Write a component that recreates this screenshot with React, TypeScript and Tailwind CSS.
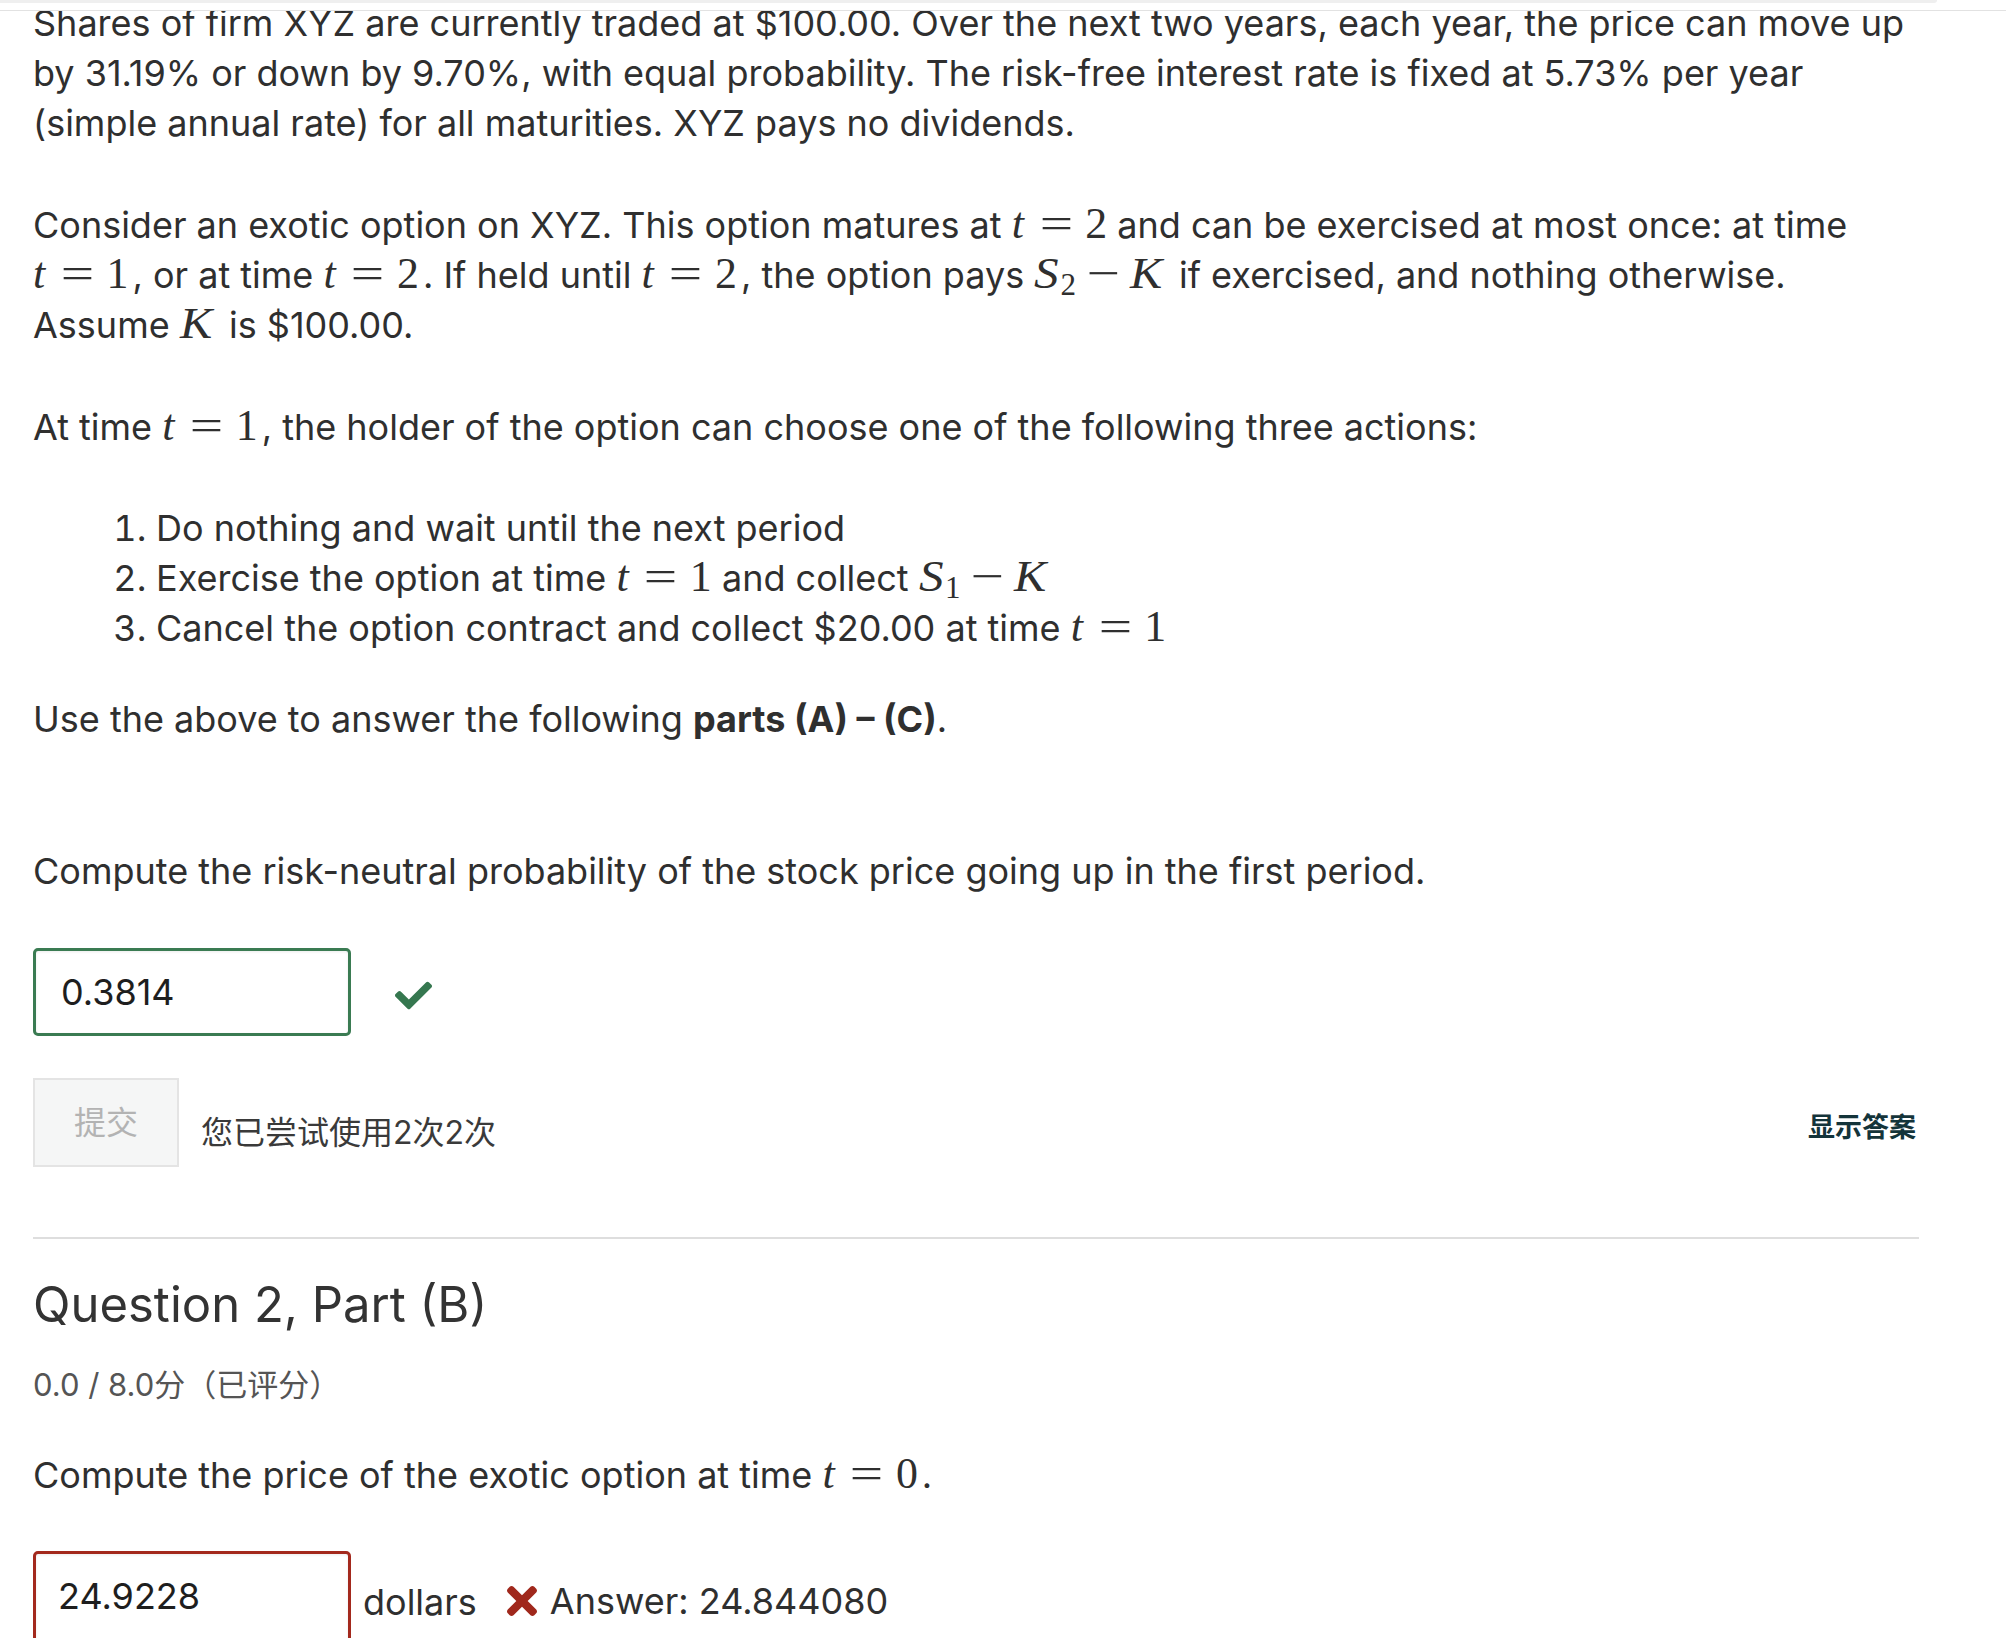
import { FaCheck, FaTimes } from "react-icons/fa";

const mathCls = "font-['Liberation_Serif',serif] text-[1.22em] leading-none whitespace-nowrap";

// wide TeX-like relation / binary operator glyph
function Op({ c, gap }: { c: string; gap: string }) {
  return (
    <span className={`inline-block w-[0.778em] text-center ${gap}`}>
      <span className="inline-block scale-x-[1.35]">{c}</span>
    </span>
  );
}

function Eq({ v, n, p }: { v: string; n: string; p?: string }) {
  return (
    <>
      <span className={mathCls}>
        <i className="inline-block w-[0.34em]">{v}</i>
        <Op c="=" gap="mx-[0.278em]" />
        {n}
      </span>
      {p && <span className="ml-[4px]">{p}</span>}
    </>
  );
}

function Payoff({ sub }: { sub: string }) {
  return (
    <span className={mathCls}>
      <i className="inline-block w-[0.6em]">
        <span className="inline-block scale-x-[1.12] origin-left">S</span>
      </i>
      <span className="inline-block w-[0.5em] text-[0.707em] relative top-[0.22em]">{sub}</span>
      <Op c="−" gap="mx-[0.222em]" />
      <i className="inline-block w-[0.889em]">
        <span className="inline-block scale-x-[1.1] origin-left">K</span>
      </i>
    </span>
  );
}

export default function App() {
  return (
    <div className="relative w-[2006px] h-[1638px] overflow-hidden bg-white text-[#2f2f2f] font-['Inter','Noto_Sans_CJK_SC',sans-serif]">
      {/* sticky header edge */}
      <div className="absolute top-0 left-0 right-0 h-[11px] bg-white border-b border-[#e2e2e2] z-10">
        <div className="h-[3px] w-[1937px] bg-[#efefef] rounded-br-[3px]" />
      </div>

      <div className="w-[1919px] pl-[33px] text-[36px] leading-[50px]">
        <p className="-mt-[2px] mb-[52px]">
          Shares of firm XYZ are currently traded at $100.00. Over the next two years, each year, the price can move up
          by 31.19% or down by 9.70%, with equal probability. The risk-free interest rate is fixed at 5.73% per year
          (simple annual rate) for all maturities. XYZ pays no dividends.
        </p>

        <p className="mb-[52px]">
          Consider an exotic option on XYZ. This option matures at <Eq v="t" n="2" /> and can be exercised at most once:
          at time <Eq v="t" n="1" p="," /> or at time <Eq v="t" n="2" p="." /> If held until <Eq v="t" n="2" p="," /> the
          option pays <Payoff sub="2" /> if exercised, and nothing otherwise. Assume{" "}
          <span className={mathCls}>
            <i className="inline-block w-[0.889em]">
              <span className="inline-block scale-x-[1.1] origin-left">K</span>
            </i>
          </span>{" "}
          is $100.00.
        </p>

        <p className="mb-[51px]">
          At time <Eq v="t" n="1" p="," /> the holder of the option can choose one of the following three actions:
        </p>

        <ol className="list-decimal pl-[123px] mb-[41px]">
          <li>Do nothing and wait until the next period</li>
          <li>
            Exercise the option at time <Eq v="t" n="1" /> and collect <Payoff sub="1" />
          </li>
          <li>
            Cancel the option contract and collect $20.00 at time <Eq v="t" n="1" />
          </li>
        </ol>

        <p className="mb-[102px]">
          Use the above to answer the following <b className="font-bold">parts (A) – (C)</b>.
        </p>

        <p className="mb-[52px]">Compute the risk-neutral probability of the stock price going up in the first period.</p>

        <div className="flex items-center gap-[44px]">
          <div className="w-[318px] h-[88px] border-[3px] border-[#3a7b52] rounded-[5px] shadow-[inset_0_1px_3px_rgba(0,0,0,0.08)] flex items-center pl-[25px] text-[#1e1e1e]">
            0.3814
          </div>
          <FaCheck className="mt-[6px] w-[37px] h-[37px] text-[#35774f]" />
        </div>

        <div className="mt-[42px] flex items-center">
          <button className="w-[146px] h-[89px] bg-[#f5f6f6] border-2 border-[#e4e4e4] text-[#b3b3b3] text-[32px] leading-none">
            提交
          </button>
          <span className="ml-[22px] mt-[20px] text-[#3a3a3a] text-[32px]">您已尝试使用2次2次</span>
          <span className="ml-auto mt-[10px] mr-[3px] text-[27px] font-semibold text-[#14343a]">显示答案</span>
        </div>

        <div className="mt-[70px] h-[2px] bg-[#dedede]" />

        <h3 className="mt-[36px] text-[49px] leading-[60px] text-[#333]">Question 2, Part (B)</h3>

        <div className="mt-[30px] text-[31px] leading-[40px] text-[#555]">0.0 / 8.0分（已评分）</div>

        <p className="mt-[45px]">
          Compute the price of the exotic option at time <Eq v="t" n="0" p="." />
        </p>

        <div className="mt-[51px] flex items-center">
          <div className="w-[318px] h-[100px] border-[3px] border-[#a3291d] rounded-[5px] shadow-[inset_0_1px_3px_rgba(0,0,0,0.08)] flex items-start pt-[17px] pl-[22px] text-[#1e1e1e]">
            24.9228
          </div>
          <span className="ml-[12px] mt-[2px]">dollars</span>
          <FaTimes className="ml-[30px] w-[30px] h-[44px] text-[#a0281c]" />
          <span className="ml-[13px]">Answer: 24.844080</span>
        </div>
      </div>
    </div>
  );
}
